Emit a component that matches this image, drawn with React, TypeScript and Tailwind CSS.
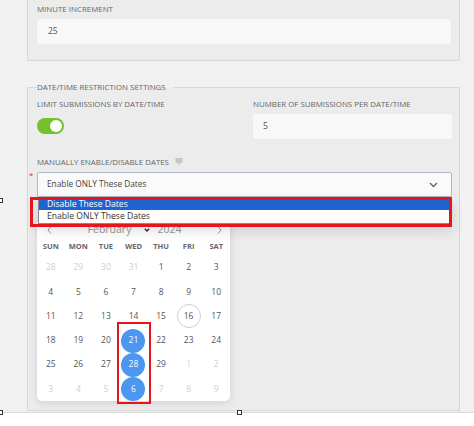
import React from "react";

type Day = { d: number; m?: boolean; s?: boolean; t?: boolean };

const rows: Day[][] = [
  [{ d: 28, m: true }, { d: 29, m: true }, { d: 30, m: true }, { d: 31, m: true }, { d: 1 }, { d: 2 }, { d: 3 }],
  [{ d: 4 }, { d: 5 }, { d: 6 }, { d: 7 }, { d: 8 }, { d: 9 }, { d: 10 }],
  [{ d: 11 }, { d: 12 }, { d: 13 }, { d: 14 }, { d: 15 }, { d: 16, t: true }, { d: 17 }],
  [{ d: 18 }, { d: 19 }, { d: 20 }, { d: 21, s: true }, { d: 22 }, { d: 23 }, { d: 24 }],
  [{ d: 25 }, { d: 26 }, { d: 27 }, { d: 28, s: true }, { d: 29 }, { d: 1, m: true }, { d: 2, m: true }],
  [{ d: 3, m: true }, { d: 4, m: true }, { d: 5, m: true }, { d: 6, s: true }, { d: 7, m: true }, { d: 8, m: true }, { d: 9, m: true }],
];

const weekdays = ["SUN", "MON", "TUE", "WED", "THU", "FRI", "SAT"];

function DayCell({ day }: { day: Day }) {
  if (day.s) {
    return (
      <div className="flex items-center justify-center">
        <div className="w-[24px] h-[24px] rounded-full bg-[#4b96ee] text-white flex items-center justify-center text-[8.5px]">
          {day.d}
        </div>
      </div>
    );
  }
  if (day.t) {
    return (
      <div className="flex items-center justify-center">
        <div className="w-[24px] h-[24px] rounded-full border border-[#cfcfcf] text-[#555] flex items-center justify-center text-[8.5px]">
          {day.d}
        </div>
      </div>
    );
  }
  return (
    <div className={`flex items-center justify-center text-[8.5px] ${day.m ? "text-[#cfcfcf]" : "text-[#555]"}`}>
      {day.d}
    </div>
  );
}

function Handle({ className }: { className: string }) {
  return <div className={`absolute w-[5px] h-[5px] border border-[#333] bg-white ${className}`} />;
}

export default function App() {
  return (
    <div className="w-[474px] h-[426px] bg-white overflow-hidden relative font-['Open_Sans',sans-serif]">
      <div className="h-[413px] bg-[#f1f1f1] border-b border-[#dadada] pl-[27px] pr-[14px]">
        {/* Minute increment box */}
        <div className="border-l border-r border-b border-[#d8d8d8] bg-[#ececed] pl-[9px] pr-[8px] pt-[4px] pb-[16px]">
          <div className="h-[10px] leading-[10px] text-[7.9px] text-[#666] uppercase">Minute Increment</div>
          <div className="mt-[5px] h-[25px] rounded-[3px] bg-[#f8f8f8] flex items-center pl-[11px] text-[8.5px] text-[#555]">
            25
          </div>
        </div>

        {/* Date/time restriction fieldset */}
        <fieldset className="mt-[21px] h-[329px] border border-[#d8d8d8] bg-[#ececed] pl-[9px] pr-[7px] pt-[7px]">
          <legend className="pr-[8px] h-[10px] leading-[10px] text-[7.9px] text-[#666] uppercase">
            Date/Time Restriction Settings
          </legend>

          <div className="grid grid-cols-[206px_1fr] gap-x-[10px]">
            <div>
              <div className="h-[10px] leading-[10px] text-[7.9px] text-[#666] uppercase">Limit Submissions By Date/Time</div>
              <div className="mt-[9px] w-[27px] h-[16px] rounded-full bg-[#74c02d] flex items-center justify-end pr-[2px]">
                <div className="w-[12px] h-[12px] rounded-full bg-white" />
              </div>
            </div>
            <div>
              <div className="h-[10px] leading-[10px] text-[7.9px] text-[#666] uppercase">Number Of Submissions Per Date/Time</div>
              <div className="mt-[5px] h-[25px] rounded-[3px] bg-[#f8f8f8] flex items-center pl-[10px] text-[8.5px] text-[#555]">
                5
              </div>
            </div>
          </div>

          <div className="mt-[18px] flex items-center gap-[6px] h-[10px]">
            <span className="leading-[10px] text-[7.9px] text-[#666] uppercase">Manually Enable/Disable Dates</span>
            <svg width="8" height="9" viewBox="0 0 8 9">
              <rect x="0.5" y="0" width="7" height="5" rx="0.5" fill="#c6c6c6" />
              <path d="M3 5 L5 5 L4 8.5 Z" fill="#c6c6c6" />
            </svg>
          </div>

          <div className="relative mt-[5px]">
            <span className="absolute left-[-8px] top-[-1px] text-[8px] leading-[8px] text-[#e0303a]">*</span>
            <div className="h-[25px] border border-[#aeb7c6] rounded-[2px] bg-[#fafafa] flex items-center justify-between pl-[9px] pr-[13px] text-[8.3px] text-[#444]">
              <span>Enable ONLY These Dates</span>
              <svg width="9" height="6" viewBox="0 0 9 6">
                <path d="M1 1 L4.5 4.5 L8 1" fill="none" stroke="#666" strokeWidth="1.4" />
              </svg>
            </div>

            {/* Calendar popup */}
            <div className="absolute left-0 top-[47px] w-[193px] h-[182px] bg-white rounded-[5px] shadow-[0_2px_8px_rgba(0,0,0,0.12)] z-10">
              <div className="h-[22px] flex items-center justify-between pl-[10px] pr-[8px] text-[10.5px] text-[#9a9a9a]">
                <svg width="5" height="8" viewBox="0 0 5 8">
                  <path d="M4 0.5 L1 4 L4 7.5" fill="none" stroke="#999" strokeWidth="1" />
                </svg>
                <div className="flex items-center">
                  <span>February</span>
                  <svg className="ml-[13px]" width="6" height="4" viewBox="0 0 6 4">
                    <path d="M0.8 0.8 L3 3 L5.2 0.8" fill="none" stroke="#333" strokeWidth="1.4" />
                  </svg>
                  <span className="ml-[7px]">2024</span>
                </div>
                <svg width="5" height="8" viewBox="0 0 5 8">
                  <path d="M1 0.5 L4 4 L1 7.5" fill="none" stroke="#999" strokeWidth="1" />
                </svg>
              </div>
              <div className="grid grid-cols-7 h-[10px]">
                {weekdays.map((w) => (
                  <div key={w} className="flex items-center justify-center text-[7.5px] font-bold text-[#666]">
                    {w}
                  </div>
                ))}
              </div>
              <div className="mt-[4.5px] grid grid-cols-7 auto-rows-[24.3px]">
                {rows.flat().map((day, i) => (
                  <DayCell key={i} day={day} />
                ))}
              </div>
              <div className="absolute left-[80px] top-[103px] w-[34px] h-[82px] border-2 border-[#e3161e]" />
            </div>

            {/* Native dropdown list */}
            <div className="absolute left-[1px] right-0 top-[25px] bg-[#fffefb] border border-[#8a8a8a] shadow-[0_6px_14px_rgba(0,0,0,0.14)] z-20">
              <div className="h-[12px] bg-[#1d63d1] text-white text-[8.6px] leading-[12px] pl-[8px]">Disable These Dates</div>
              <div className="h-[13px] text-[#333] text-[8.6px] leading-[13px] pl-[8px]">Enable ONLY These Dates</div>
            </div>
            <div className="absolute left-[-7px] top-[25px] w-[422px] h-[30px] border-[3px] border-[#e3161e] z-30" />
          </div>
        </fieldset>
      </div>

      <Handle className="left-[-2px] top-[198px]" />
      <Handle className="left-[-2px] top-[410px]" />
      <Handle className="left-[237px] top-[410px]" />
    </div>
  );
}
